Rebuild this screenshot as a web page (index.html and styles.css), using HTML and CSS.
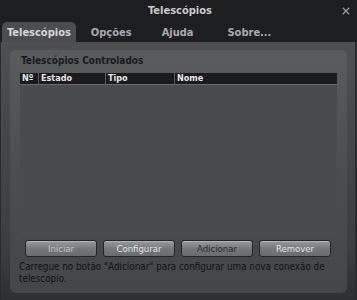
FILE: index.html
```html
<!DOCTYPE html>
<html lang="pt">
<head>
  <meta charset="UTF-8" />
  <title>Telescópios</title>
  <link rel="stylesheet" href="styles.css">
</head>
<body>

  <div class="window">
    <!-- Title bar -->
    <div class="titlebar">
      <span class="title">Telescópios</span>
      <span class="close">
        <svg viewBox="0 0 10 10" width="8" height="8">
          <path d="M1 1 L9 9 M9 1 L1 9" stroke="#9a9b9d" stroke-width="1.6" />
        </svg>
      </span>
    </div>

    <!-- Tabs -->
    <div class="tabs">
      <div class="tab active">Telescópios</div>
      <div class="tab">Opções</div>
      <div class="tab">Ajuda</div>
      <div class="tab">Sobre...</div>
    </div>

    <!-- Content -->
    <div class="content">
      <div class="group">
        <div class="group-title">Telescópios Controlados</div>

        <div class="table">
          <div class="thead">
            <div class="col c-num">Nº</div>
            <div class="col c-state">Estado</div>
            <div class="col c-type">Tipo</div>
            <div class="col c-name">Nome</div>
          </div>
          <div class="tbody"></div>
        </div>

        <div class="buttons">
          <button class="btn disabled">Iniciar</button>
          <button class="btn">Configurar</button>
          <button class="btn dark">Adicionar</button>
          <button class="btn">Remover</button>
        </div>

        <p class="hint">Carregue no botão "Adicionar" para configurar uma nova conexão de telescópio.</p>
      </div>
    </div>
  </div>

</body>
</html>
```

FILE: styles.css
```css
body {
  margin: 0;
  background-color: #1c1d1f;
  font-family: "DejaVu Sans", Verdana, sans-serif;
}

.window {
  width: 357px;
  height: 300px;
  display: flex;
  flex-direction: column;
  background-color: #1d1e20;
}

.titlebar {
  height: 21px;
  display: flex;
  align-items: center;
  justify-content: center;
  position: relative;
}

.title {
  color: #c9cacc;
  font-family: "DejaVu Sans Condensed", sans-serif;
  font-weight: bold;
  font-size: 11px;
  padding-left: 3px;
}

.close {
  position: absolute;
  right: 7px;
  top: 7px;
  line-height: 0;
}

.tabs {
  height: 21px;
  display: flex;
  align-items: flex-end;
  padding-left: 2px;
}

.tab {
  height: 20px;
  display: flex;
  align-items: center;
  color: #a9aaac;
  font-family: "DejaVu Sans Condensed", sans-serif;
  font-weight: bold;
  font-size: 11px;
  padding: 0 15px 0 0;
}

.tab.active {
  background-color: #4c4d4f;
  color: #d6d7d9;
  border-radius: 5px 5px 0 0;
  padding: 0 5px;
  margin-right: 15px;
}

.tab:nth-child(3) {
  padding-left: 15px;
  padding-right: 34px;
}

.content {
  flex: 1;
  background: linear-gradient(#4e4f51, #3c3d3f 80%, #2e2f31);
  padding: 8px 8px 7px 9px;
  display: flex;
  border-right: 2px solid #2a2b2d;
  border-left: 1px solid #2a2b2d;
}

.group {
  flex: 1;
  background: linear-gradient(#5a5b5d, #4c4d4f 50%, #454648);
  border-radius: 6px;
  padding: 5px 8px 0 9px;
  display: flex;
  flex-direction: column;
}

.group-title {
  color: #1a1b1c;
  font-family: "DejaVu Sans Condensed", sans-serif;
  font-weight: bold;
  font-size: 10px;
  margin-bottom: 7px;
  margin-left: 2px;
}

.table {
  height: 162px;
  display: flex;
  flex-direction: column;
  margin-left: 1px;
  margin-right: 2px;
}

.thead {
  display: flex;
  height: 11px;
  background-color: #1b1b1c;
  border-bottom: 1px solid #6a6b6d;
}

.col {
  color: #e6e6e8;
  font-family: "DejaVu Sans Condensed", sans-serif;
  font-weight: bold;
  font-size: 9px;
  line-height: 11px;
  padding-left: 2px;
  border-right: 1px solid #5a5b5d;
}

.c-num { width: 16px; }
.c-state { width: 64px; }
.c-type { width: 66px; }
.c-name { flex: 1; border-right: none; }

.tbody {
  flex: 1;
  background-color: #4a4b4d;
}

.buttons {
  display: flex;
  justify-content: space-between;
  padding: 5px 8px 0 6px;
}

.btn {
  width: 72px;
  height: 17px;
  padding: 0;
  border: 1px solid #232425;
  border-radius: 3px;
  background: linear-gradient(#9a9b9d, #77787a 50%, #6a6b6d);
  box-shadow: inset 0 1px 0 #b0b1b3;
  color: #e4e4e6;
  font-family: "DejaVu Sans Condensed", sans-serif;
  font-size: 9.5px;
}

.btn.disabled {
  color: #c4c5c7;
}

.btn.dark {
  color: #2a2b2c;
}

.hint {
  margin: 4px 0 0 0;
  color: #111213;
  font-size: 9.8px;
  font-family: "DejaVu Sans Condensed", sans-serif;
  line-height: 12px;
}
```
